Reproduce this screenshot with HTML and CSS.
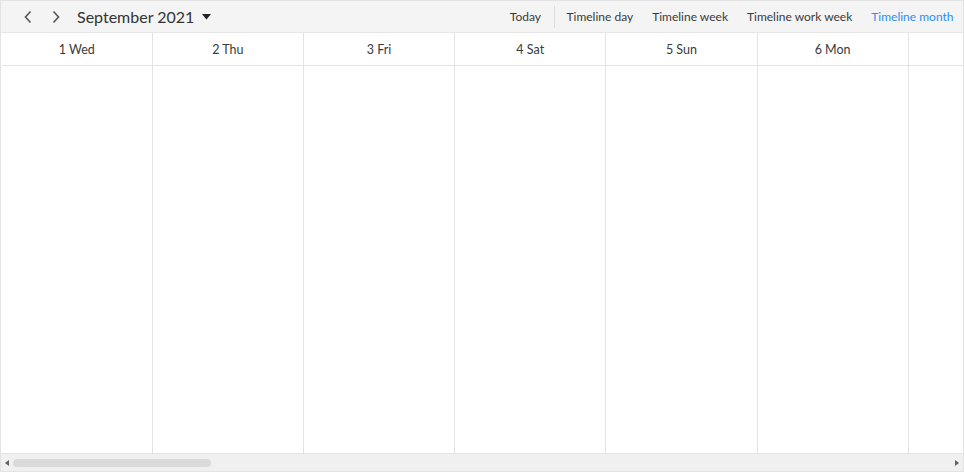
FILE: index.html
```html
<!DOCTYPE html>
<html lang="en">
<head>
  <meta charset="UTF-8">
  <title>Timeline month</title>
  <link rel="stylesheet" href="styles.css">
</head>
<body>
  <div class="scheduler">
    <div class="toolbar">
      <div class="nav">
        <button class="nav-btn" aria-label="Previous">
          <svg width="10" height="14" viewBox="0 0 10 14"><path d="M7.5 1.5 L2.5 7 L7.5 12.5" fill="none" stroke="#555" stroke-width="1.6"/></svg>
        </button>
        <button class="nav-btn" aria-label="Next">
          <svg width="10" height="14" viewBox="0 0 10 14"><path d="M2.5 1.5 L7.5 7 L2.5 12.5" fill="none" stroke="#555" stroke-width="1.6"/></svg>
        </button>
        <button class="date-btn">
          September 2021
          <svg width="9" height="6" viewBox="0 0 9 6"><path d="M0 0 H9 L4.5 5.5 Z" fill="#222"/></svg>
        </button>
      </div>
      <div class="views">
        <button class="view today">Today</button>
        <span class="sep"></span>
        <button class="view">Timeline day</button>
        <button class="view">Timeline week</button>
        <button class="view">Timeline work week</button>
        <button class="view active">Timeline month</button>
      </div>
    </div>

    <div class="grid">
      <div class="col"><div class="head">1 Wed</div><div class="cell"></div></div>
      <div class="col"><div class="head">2 Thu</div><div class="cell"></div></div>
      <div class="col"><div class="head">3 Fri</div><div class="cell"></div></div>
      <div class="col"><div class="head">4 Sat</div><div class="cell"></div></div>
      <div class="col"><div class="head">5 Sun</div><div class="cell"></div></div>
      <div class="col"><div class="head">6 Mon</div><div class="cell"></div></div>
      <div class="col"><div class="head"></div><div class="cell"></div></div>
    </div>

    <div class="hscroll">
      <span class="arrow left"></span>
      <div class="track"><div class="thumb"></div></div>
      <span class="arrow right"></span>
    </div>
  </div>
</body>
</html>
```

FILE: styles.css
```css
* {
  box-sizing: border-box;
}

body {
  margin: 0;
  font-family: "Segoe UI", Lato, "Noto Sans", sans-serif;
  color: #333;
  background: #fff;
}

button {
  font: inherit;
  color: inherit;
  background: none;
  border: none;
  padding: 0;
  cursor: pointer;
}

.scheduler {
  width: 964px;
  height: 472px;
  border: 1px solid #e3e3e3;
  display: flex;
  flex-direction: column;
  overflow: hidden;
}

/* toolbar */
.toolbar {
  height: 32px;
  flex: none;
  display: flex;
  align-items: center;
  justify-content: space-between;
  background-color: #f4f4f4;
  border-bottom: 1px solid #e6e6e6;
}

.nav {
  display: flex;
  align-items: center;
  padding-left: 13px;
}

.nav-btn {
  width: 28px;
  height: 28px;
  display: flex;
  align-items: center;
  justify-content: center;
}

.date-btn {
  display: flex;
  align-items: center;
  gap: 8px;
  margin-left: 7px;
  font-size: 16px;
  color: #333;
}

.views {
  display: flex;
  align-items: center;
  height: 100%;
  padding-right: 0;
}

.view {
  font-size: 12px;
  color: #3a3a3a;
  padding: 0 9.5px;
  height: 32px;
}

.view.today {
  padding-right: 13px;
}

.view.active {
  color: #2f8cf0;
}

.sep {
  width: 1px;
  height: 22px;
  background-color: #dcdcdc;
  margin-right: 2px;
}

/* grid */
.grid {
  flex: 1;
  display: flex;
  padding-left: 0.6px;
  border-bottom: 1px solid #e3e3e3;
  overflow: hidden;
}

.col {
  flex: none;
  width: 151.2px;
  display: flex;
  flex-direction: column;
  border-right: 1px solid #e3e3e3;
}

.head {
  height: 33px;
  flex: none;
  display: flex;
  align-items: center;
  justify-content: center;
  font-size: 12.5px;
  color: #3a3a3a;
  border-bottom: 1px solid #e3e3e3;
}

.cell {
  flex: 1;
}

/* scrollbar */
.hscroll {
  height: 17px;
  flex: none;
  display: flex;
  align-items: center;
  background-color: #f0f0f0;
  padding: 0 4px;
}

.track {
  flex: 1;
  height: 8px;
  margin: 0 4px;
}

.thumb {
  width: 198px;
  height: 8px;
  border-radius: 4px;
  background-color: #dadada;
}

.arrow {
  width: 0;
  height: 0;
  border-top: 3.5px solid transparent;
  border-bottom: 3.5px solid transparent;
}

.arrow.left {
  border-right: 4px solid #606060;
}

.arrow.right {
  border-left: 4px solid #606060;
}
```
